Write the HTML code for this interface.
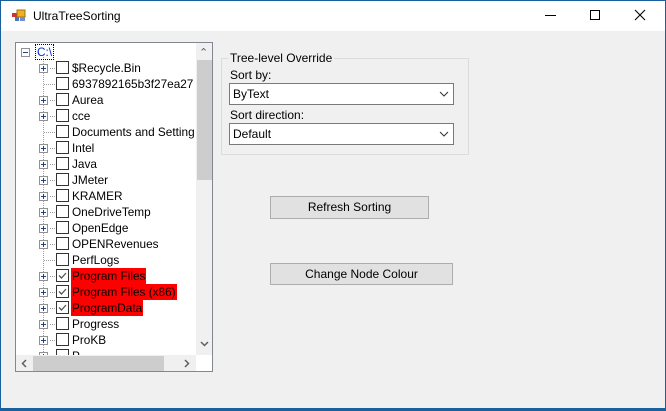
<!DOCTYPE html>
<html><head><style>
*{margin:0;padding:0;box-sizing:border-box}
body{width:666px;height:411px;overflow:hidden;background:#1a5f9e;font-family:"Liberation Sans",sans-serif;font-size:12px;position:relative}
.win{position:absolute;left:1px;top:1px;width:664px;height:407px;background:#f0f0f0}
.title{position:absolute;left:0;top:0;width:664px;height:30px;background:#fff}
.abs{position:absolute}
.tree{position:absolute;left:14px;top:41px;width:198px;height:330px;border:1px solid #828790;background:#fff;overflow:hidden}
.row{position:absolute;height:16px;line-height:16px;white-space:nowrap;font-size:11.8px}
.exp{position:absolute;width:9px;height:9px;border:1px solid #919191;background:#fff}
.exp:before{content:"";position:absolute;left:1px;top:3px;width:5px;height:1px;background:#1f3f8f}
.exp.p:after{content:"";position:absolute;left:3px;top:1px;width:1px;height:5px;background:#1f3f8f}
.cb{position:absolute;width:13px;height:13px;border:1px solid #333;background:#fff}
.txt{position:absolute;padding:0 1px}
.red{background:#f00}
.dotv{position:absolute;border-left:1px dotted #a0a0a0}
.doth{position:absolute;border-top:1px dotted #a0a0a0;height:0}
.combo{position:absolute;left:228px;width:225px;height:22px;border:1px solid #7a7a7a;background:#fff;line-height:20px;padding-left:3px}
.btn{position:absolute;border:1px solid #adadad;background:#e1e1e1;text-align:center;line-height:20px}
</style></head><body>
<div class="win">
<div class="title">
 <svg class="abs" style="left:11px;top:8px" width="14" height="13"><rect x="0" y="4" width="5" height="4" fill="#c33"/><rect x="5" y="1" width="8" height="7" fill="#f0b020" stroke="#a07010" stroke-width="1"/><rect x="3" y="8" width="4" height="4" fill="#5070c0"/><rect x="8" y="8" width="5" height="4" fill="#7090d0"/></svg>
 <div class="abs" style="left:32px;top:8px;font-size:12px">UltraTreeSorting</div>
 <div class="abs" style="left:544px;top:14px;width:11px;height:1px;background:#000"></div>
 <div class="abs" style="left:589px;top:9px;width:10px;height:10px;border:1px solid #000"></div>
 <svg class="abs" style="left:633px;top:8px" width="12" height="12"><path d="M1 1L11 11M11 1L1 11" stroke="#000" stroke-width="1.1"/></svg>
</div>
<div class="tree">
 <div class="dotv" style="left:27px;top:14px;height:315px"></div>
 <div class="exp" style="left:5px;top:5px"></div>
 <div class="row" style="left:19px;top:1px"><span style="border:1px dotted #000;padding:0 1px;color:#0033cc">C:\</span></div>
 <div id="rows"></div>
 <div class="abs" style="left:180px;top:0;width:17px;height:312px;background:#f0f0f0"></div>
 <div class="abs" style="left:181px;top:17px;width:15px;height:120px;background:#cdcdcd"></div>
 <div class="abs" style="left:183px;top:3px;font-size:11px;color:#606060">&#8963;</div>
 <svg class="abs" style="left:184px;top:298px" width="9" height="6"><path d="M1 1L4.5 4.5L8 1" stroke="#606060" fill="none" stroke-width="1.5"/></svg>
 <div class="abs" style="left:0;top:312px;width:180px;height:17px;background:#f0f0f0"></div>
 <div class="abs" style="left:17px;top:313px;width:131px;height:15px;background:#cdcdcd"></div>
 <svg class="abs" style="left:5px;top:316px" width="6" height="9"><path d="M5 1L1.5 4.5L5 8" stroke="#606060" fill="none" stroke-width="1.5"/></svg>
 <svg class="abs" style="left:168px;top:316px" width="6" height="9"><path d="M1 1L4.5 4.5L1 8" stroke="#606060" fill="none" stroke-width="1.5"/></svg>
</div>
<div class="abs" style="left:220px;top:57px;width:248px;height:97px;border:1px solid #dcdcdc"></div>
<div class="abs" style="left:227px;top:50px;background:#f0f0f0;padding:0 2px">Tree-level Override</div>
<div class="abs" style="left:229px;top:67px">Sort by:</div>
<div class="combo" style="top:82px">ByText</div>
<div class="abs" style="left:229px;top:107px">Sort direction:</div>
<div class="combo" style="top:122px">Default</div>
<svg class="abs" style="left:438px;top:90px" width="10" height="6"><path d="M1 1L5 5L9 1" stroke="#333" fill="none"/></svg>
<svg class="abs" style="left:438px;top:130px" width="10" height="6"><path d="M1 1L5 5L9 1" stroke="#333" fill="none"/></svg>
<div class="btn" style="left:269px;top:195px;width:159px;height:23px">Refresh Sorting</div>
<div class="btn" style="left:269px;top:262px;width:183px;height:22px">Change Node Colour</div>
</div>
<script>
var items=[["$Recycle.Bin",1],["6937892165b3f27ea27",0],["Aurea",1],["cce",1],["Documents and Setting",0],["Intel",1],["Java",1],["JMeter",1],["KRAMER",1],["OneDriveTemp",1],["OpenEdge",1],["OPENRevenues",1],["PerfLogs",0],["Program Files",1,1],["Program Files (x86)",1,1],["ProgramData",1,1],["Progress",1],["ProKB",1],["P",1]];
var h="";items.forEach(function(it,i){var y=17+i*16;
h+='<div class="doth" style="left:'+(it[1]?34:28)+'px;top:'+(y+8)+'px;width:'+(it[1]?5:11)+'px"></div>';
if(it[1])h+='<div class="exp p" style="left:23px;top:'+(y+4)+'px"></div>';
h+='<div class="cb" style="left:40px;top:'+(y+1)+'px">'+(it[2]?'<svg width="11" height="11" style="position:absolute;left:0;top:0"><path d="M2 5.5L4.5 8L9 3" stroke="#555" fill="none" stroke-width="1.3"/></svg>':'')+'</div>';
h+='<div class="row txt'+(it[2]?' red':'')+'" style="left:55px;top:'+y+'px">'+it[0]+'</div>';});
document.getElementById("rows").innerHTML=h;
</script>
</body></html>
